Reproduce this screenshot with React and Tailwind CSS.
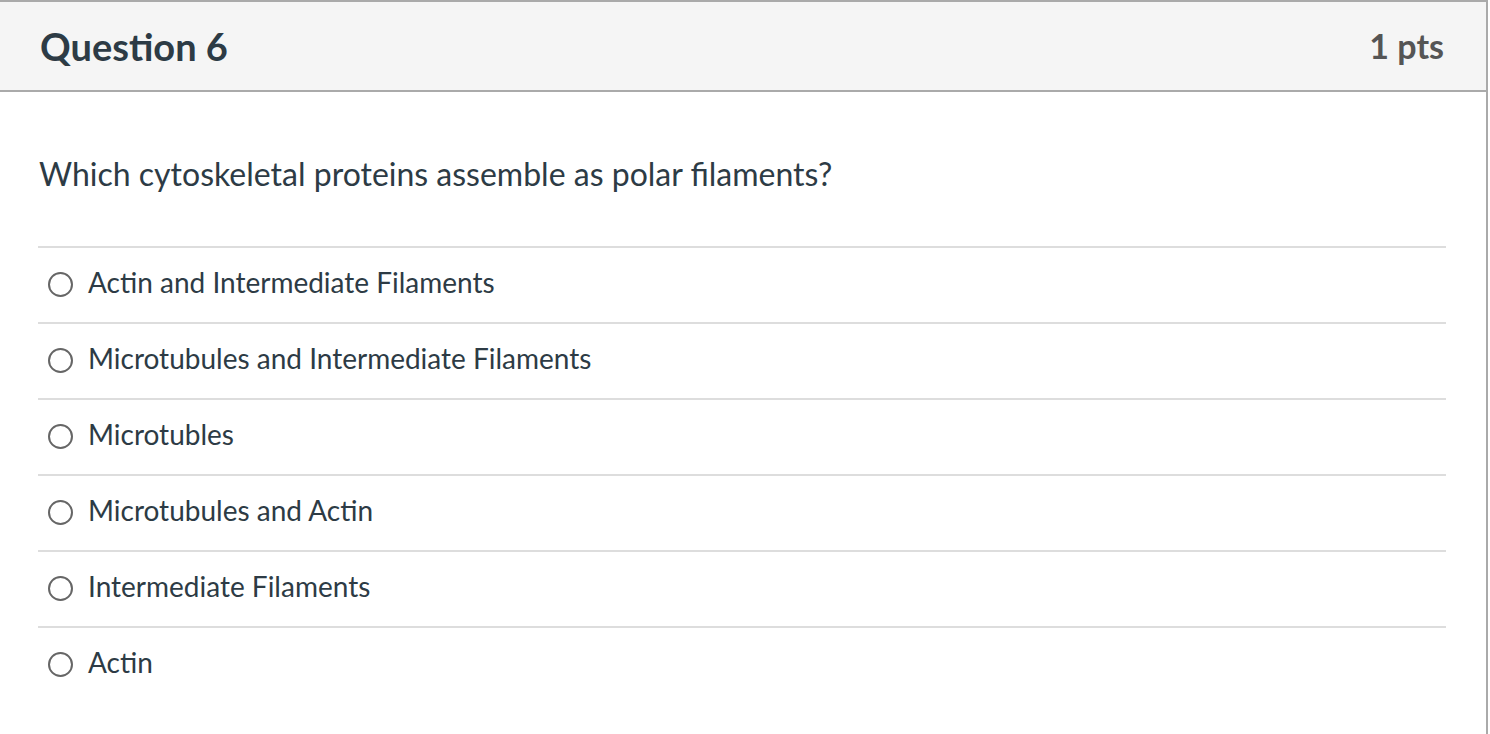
const answers = [
  "Actin and Intermediate Filaments",
  "Microtubules and Intermediate Filaments",
  "Microtubles",
  "Microtubules and Actin",
  "Intermediate Filaments",
  "Actin",
];

export default function App() {
  return (
    <div className="w-[1490px] h-[734px] bg-white overflow-hidden font-['Lato',sans-serif] text-[#2d3b45]">
      <div className="w-[1488px] h-full border-t-2 border-r-2 border-[#aaaaaa]">
        {/* header */}
        <div className="h-[90px] bg-[#f5f5f5] border-b-2 border-[#aaaaaa] flex items-center justify-between pl-[40px] pr-[42px]">
          <h2 className="text-[38px] font-bold leading-none">Question 6</h2>
          <span className="text-[34px] font-bold text-[#555555] leading-none">1 pts</span>
        </div>

        {/* body */}
        <div className="px-[38px] pr-[40px] pt-[62px]">
          <p className="text-[32px] leading-[40px] pl-[1px]">
            Which cytoskeletal proteins assemble as polar filaments?
          </p>
          <div className="mt-[52px]">
            {answers.map((a, i) => (
              <label
                key={i}
                className="flex items-center h-[76px] border-t-2 border-[#dddddd] cursor-pointer"
              >
                <span className="ml-[10px] mt-[-2px] w-[25px] h-[25px] rounded-full border-2 border-[#666666] shrink-0" />
                <span className="ml-[15px] text-[28px] leading-[34px] mt-[-6px]">{a}</span>
              </label>
            ))}
          </div>
        </div>
      </div>
    </div>
  );
}
